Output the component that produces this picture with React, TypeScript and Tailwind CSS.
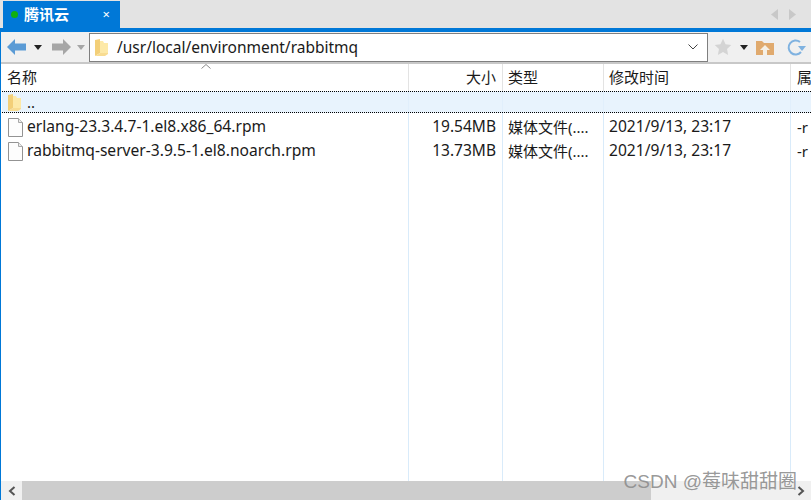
import { Fragment } from "react";

const FONT = "font-['Noto_Sans','Noto_Sans_CJK_SC',sans-serif]";

const rows = [
  { name: "erlang-23.3.4.7-1.el8.x86_64.rpm", size: "19.54MB" },
  { name: "rabbitmq-server-3.9.5-1.el8.noarch.rpm", size: "13.73MB" },
];

const FolderIcon = () => (
  <svg viewBox="0 0 13 17" className="w-[13px] h-[17px] shrink-0">
    <path d="M5 2 H8 L9 4 H13 V15 H5 Z" fill="#fde9a8" />
    <path d="M0 1 L5 0 V14 L0 17 Z" fill="#f3cf78" />
    <path d="M0 17 L5 14 H13 V15 L10 17 Z" fill="#f8dc92" />
  </svg>
);

const FileIcon = () => (
  <svg viewBox="0 0 15 19" className="w-[15px] h-[19px] shrink-0">
    <path d="M0.500 0.500 H10.500 L14.500 4.500 V18.500 H0.500 Z" fill="#fdfdfd" stroke="#939393" />
    <path d="M10.500 0.500 V4.500 H14.500" fill="#ececec" stroke="#a8a8a8" />
  </svg>
);

const Caret = ({ color }: { color: string }) => (
  <svg viewBox="0 0 8 5" className="w-[8px] h-[5px] shrink-0">
    <path d="M0 0 H8 L4 5 Z" fill={color} />
  </svg>
);

const Arrow = ({ color, flip }: { color: string; flip?: boolean }) => (
  <svg viewBox="0 0 19 16" className={`w-[19px] h-[16px] shrink-0 ${flip ? "-scale-x-100" : ""}`}>
    <path d="M0 8 L8 0 V4.500 H19 V11.500 H8 V16 Z" fill={color} />
  </svg>
);

const Columns = () => (
  <Fragment>
    <div className="w-[407px] h-full" />
    <div className="w-[94px] h-full border-l border-[#d9ebfa]" />
    <div className="w-[101px] h-full border-l border-[#d9ebfa]" />
    <div className="w-[187px] h-full border-l border-[#d9ebfa]" />
    <div className="flex-1 h-full border-l border-[#d9ebfa]" />
  </Fragment>
);

export default function App() {
  return (
    <div className={`relative w-[811px] h-[500px] overflow-hidden flex flex-col bg-white text-[15px] text-[#1a1a1a] ${FONT}`}>
      {/* tab bar */}
      <div className="h-[28px] shrink-0 bg-[#e3e3e3] flex items-end pl-[3px]">
        <div className="w-[117px] h-[27px] bg-[#0078d7] flex items-center pl-[8px] pr-[10px] text-white">
          <span className="w-[7px] h-[7px] rounded-full bg-[#10b010]" />
          <span className="ml-[6px] font-bold text-[15px] leading-none">腾讯云</span>
          <span className="ml-auto text-[13px] leading-none">×</span>
        </div>
        <div className="ml-auto flex items-center gap-[11px] pr-[15px] pb-[8px]">
          <svg viewBox="0 0 7 11" className="w-[7px] h-[11px]"><path d="M7 0 V11 L0 5.500 Z" fill="#c8c8c8" /></svg>
          <svg viewBox="0 0 7 11" className="w-[7px] h-[11px]"><path d="M0 0 V11 L7 5.500 Z" fill="#c8c8c8" /></svg>
        </div>
      </div>

      <div className="flex-1 min-h-0 flex flex-col border-l border-[#0078d7]">
        <div className="h-[4px] -ml-px shrink-0 bg-[#0078d7]" />

        {/* toolbar */}
        <div className="h-[32px] shrink-0 bg-[#f0f0f0] border-b-2 border-[#c8c8c8] flex items-center pl-[6px]">
          <Arrow color="#5b9bd5" />
          <div className="ml-[8px]"><Caret color="#222222" /></div>
          <div className="ml-[10px]"><Arrow color="#a6a6a6" flip /></div>
          <div className="ml-[6px]"><Caret color="#a6a6a6" /></div>
          <div className="ml-[4px] w-[619px] h-[29px] bg-white border border-[#7f7f7f] flex items-center pl-[5px] pr-[9px]">
            <FolderIcon />
            <span className="ml-[9px] pt-[1px] text-[15.500px] leading-none whitespace-nowrap">/usr/local/environment/rabbitmq</span>
            <svg viewBox="0 0 10 6" className="ml-auto w-[10px] h-[6px]">
              <path d="M0.500 0.500 L5 5 L9.500 0.500" fill="none" stroke="#444444" />
            </svg>
          </div>
          <svg viewBox="0 0 24 24" className="ml-[6px] w-[18px] h-[18px]">
            <path d="M12 1 L15.400 8.300 L23 9.200 L17.400 14.600 L18.800 22.500 L12 18.600 L5.200 22.500 L6.600 14.600 L1 9.200 L8.600 8.300 Z" fill="#d4d4d4" />
          </svg>
          <div className="ml-[8px]"><Caret color="#222222" /></div>
          <svg viewBox="0 0 18 16" className="ml-[8px] w-[18px] h-[16px]">
            <path d="M0 2 H6 L8 4 H18 V16 H0 Z" fill="#e0aa6e" />
            <path d="M9 6 L14 11 H11 V16 H7 V11 H4 Z" fill="#f5f0e6" />
          </svg>
          <svg viewBox="0 0 20 18" className="ml-[12px] w-[20px] h-[18px]">
            <path d="M15 14 A7 7 0 1 1 14 4" fill="none" stroke="#7fb2e0" strokeWidth="2" />
            <path d="M12 8 H20 L16 13 Z" fill="#7fb2e0" />
          </svg>
        </div>

        {/* list header */}
        <div className="relative h-[27px] shrink-0 flex bg-white leading-[27px]">
          <div className="w-[407px] pl-[6px]">名称</div>
          <div className="w-[94px] border-l border-[#e3e3e3] text-right pr-[6px]">大小</div>
          <div className="w-[101px] border-l border-[#e3e3e3] pl-[5px]">类型</div>
          <div className="w-[187px] border-l border-[#e3e3e3] pl-[5px]">修改时间</div>
          <div className="flex-1 border-l border-[#e3e3e3] pl-[6px] whitespace-nowrap overflow-hidden">属性</div>
          <svg viewBox="0 0 10 5" className="absolute left-[200px] top-0 w-[10px] h-[5px]">
            <path d="M0.500 4.500 L5 0.500 L9.500 4.500" fill="none" stroke="#8a8a8a" />
          </svg>
        </div>

        {/* list body */}
        <div className="flex-1 min-h-0 relative">
          <div className="absolute inset-0 flex pointer-events-none"><Columns /></div>
          <div className="relative">
            <div className="h-[22px] ml-[1px] border-y border-dotted border-black bg-[#e2f0fd]/80 flex items-center pl-[6px]">
              <FolderIcon />
              <span className="ml-[6px] leading-none">..</span>
            </div>
            <div className="h-[1px]" />
            {rows.map((row) => (
              <div key={row.name} className="h-[24px] pt-[2px] flex items-center leading-none">
                <div className="w-[407px] flex items-center pl-[7px]">
                  <FileIcon />
                  <span className="ml-[4px] text-[15.600px] whitespace-nowrap">{row.name}</span>
                </div>
                <div className="w-[94px] ml-px text-right pr-[7px] text-[15.500px]">{row.size}</div>
                <div className="w-[101px] pl-[5px] whitespace-nowrap">媒体文件(....</div>
                <div className="w-[187px] pl-[5px] text-[15.600px] whitespace-nowrap">2021/9/13, 23:17</div>
                <div className="w-[14px] ml-[6px] whitespace-nowrap overflow-hidden">-r</div>
              </div>
            ))}
          </div>
        </div>

        {/* horizontal scrollbar */}
        <div className="h-[19px] shrink-0 bg-[#f0f0f0] flex items-center">
          <div className="w-[21px] flex justify-center">
            <svg viewBox="0 0 8 10" className="w-[8px] h-[10px]"><path d="M6.500 1 L2 5 L6.500 9" fill="none" stroke="#555555" strokeWidth="2" /></svg>
          </div>
          <div className="w-[629px] h-full bg-[#cdcdcd]" />
          <div className="ml-auto w-[21px] flex justify-center">
            <svg viewBox="0 0 8 10" className="w-[8px] h-[10px]"><path d="M1.500 1 L6 5 L1.500 9" fill="none" stroke="#555555" strokeWidth="2" /></svg>
          </div>
        </div>
      </div>

      {/* watermark */}
      <div className="absolute right-[14px] bottom-[9px] font-['Liberation_Sans','Noto_Sans_CJK_SC',sans-serif] text-[19px] leading-none text-[#8c8c8c]/90 whitespace-nowrap">CSDN @莓味甜甜圈</div>
    </div>
  );
}
